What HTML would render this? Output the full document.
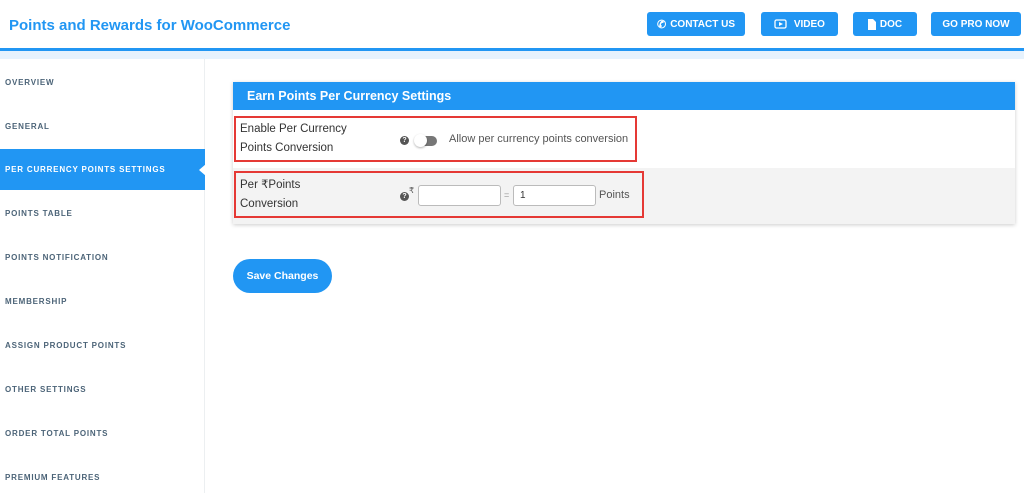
<!DOCTYPE html>
<html><head><style>
*{box-sizing:border-box;margin:0;padding:0}
body{width:1024px;height:493px;overflow:hidden;background:#fff;font-family:"Liberation Sans",sans-serif;position:relative}
.hdr{position:absolute;left:0;top:0;width:1024px;height:51px;background:#fff;border-bottom:3px solid #2196f3}
.title{position:absolute;left:9px;top:17px;font-size:15px;font-weight:bold;color:#2196f3}
.btn{position:absolute;top:12px;height:24px;background:#2196f3;color:#fff;font-size:10px;font-weight:bold;border-radius:3px;display:flex;align-items:center;justify-content:center;gap:4px}
.strip{position:absolute;left:0;top:51px;width:1024px;height:8px;background:#e6f2fd}
.side{position:absolute;left:0;top:59px;width:205px;height:434px;background:#fff;border-right:1px solid #eceff1}
.it{position:absolute;left:5px;font-size:8px;font-weight:bold;letter-spacing:.8px;color:#4c6478}
.act{position:absolute;left:0;top:149px;width:205px;height:41px;background:#2196f3}
.card{position:absolute;left:233px;top:82px;width:782px;height:142px;background:#fff;box-shadow:0 1px 4px rgba(0,0,0,.2)}
.ch{height:28px;background:#2196f3;color:#fff;font-weight:bold;font-size:12.5px;padding:7px 14px}
.r2{position:absolute;left:0;top:86px;width:782px;height:56px;background:#f3f3f3}
.box{position:absolute;border:2px solid #e53935}
.lbl{position:absolute;font-size:11.5px;color:#333;line-height:19px}
.q{position:absolute;width:9px;height:9px;border-radius:50%;background:#555;color:#fff;font-size:7px;font-weight:bold;text-align:center;line-height:9px}
.inp{position:absolute;height:21px;border:1px solid #bbb;border-radius:3px;background:#fff;font-size:10px;padding:4px 6px;color:#333}
.save{position:absolute;left:233px;top:259px;width:99px;height:34px;border-radius:17px;background:#2196f3;color:#fff;font-size:10.5px;font-weight:bold;text-align:center;line-height:34px}
</style></head><body>
<div class="hdr"><div class="title">Points and Rewards for WooCommerce</div>
<div class="btn" style="left:647px;width:98px"><span style="font-size:11px">&#9990;</span>CONTACT US</div>
<div class="btn" style="left:761px;width:77px"><svg width="13" height="10"><rect x="1" y="1" width="11" height="8" rx="1.5" fill="none" stroke="#fff" stroke-width="1.3"/><path d="M5 3 L9 5 L5 7Z" fill="#fff"/></svg>&nbsp;VIDEO</div>
<div class="btn" style="left:853px;width:64px"><svg width="8" height="11"><path d="M0 0H5L8 3V11H0Z" fill="#fff"/></svg>DOC</div>
<div class="btn" style="left:931px;width:90px">GO PRO NOW</div>
</div>
<div class="strip"></div>
<div class="side"></div>
<div class="act"></div>
<svg style="position:absolute;left:199px;top:164px" width="7" height="12"><path d="M7 0L0 6L7 12Z" fill="#fff"/></svg>
<div class="it" style="top:78px">OVERVIEW</div>
<div class="it" style="top:122px">GENERAL</div>
<div class="it" style="top:165px;color:#fff">PER CURRENCY POINTS SETTINGS</div>
<div class="it" style="top:209px">POINTS TABLE</div>
<div class="it" style="top:253px">POINTS NOTIFICATION</div>
<div class="it" style="top:297px">MEMBERSHIP</div>
<div class="it" style="top:341px">ASSIGN PRODUCT POINTS</div>
<div class="it" style="top:385px">OTHER SETTINGS</div>
<div class="it" style="top:429px">ORDER TOTAL POINTS</div>
<div class="it" style="top:473px">PREMIUM FEATURES</div>
<div class="card"><div class="ch">Earn Points Per Currency Settings</div><div class="r2"></div></div>
<div class="box" style="left:234px;top:116px;width:403px;height:46px"></div>
<div class="lbl" style="left:240px;top:120px">Enable Per Currency<br>Points Conversion</div>
<div class="q" style="left:400px;top:136px">?</div>
<div style="position:absolute;left:417px;top:136px;width:20px;height:10px;border-radius:5px;background:#777"></div>
<div style="position:absolute;left:414px;top:134px;width:13px;height:13px;border-radius:50%;background:#fff;box-shadow:0 1px 2px rgba(0,0,0,.3)"></div>
<div style="position:absolute;left:449px;top:133px;font-size:11px;color:#555">Allow per currency points conversion</div>
<div class="box" style="left:234px;top:171px;width:410px;height:47px"></div>
<div class="lbl" style="left:240px;top:176px">Per ₹Points<br>Conversion</div>
<div class="q" style="left:400px;top:192px">?</div>
<div style="position:absolute;left:409px;top:186px;font-size:8px;color:#555">₹</div>
<div class="inp" style="left:418px;top:185px;width:83px"></div>
<div style="position:absolute;left:504px;top:190px;font-size:9px;color:#999">=</div>
<div class="inp" style="left:513px;top:185px;width:83px">1</div>
<div style="position:absolute;left:599px;top:189px;font-size:11px;color:#555">Points</div>
<div class="save">Save Changes</div>
</body></html>
